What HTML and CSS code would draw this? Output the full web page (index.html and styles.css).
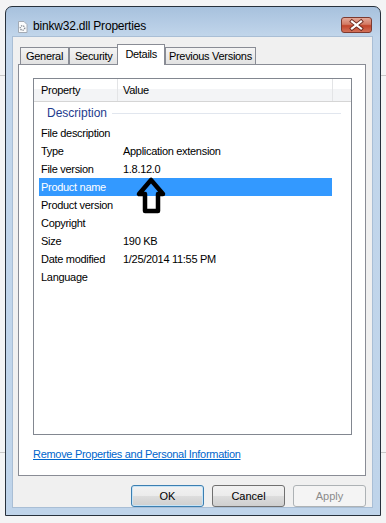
FILE: index.html
```html
<html>
  <head>
    <meta charset="utf-8"/>
    <link rel="stylesheet" href="styles.css">
  </head>
  <body>
    <div class="window">
      <div class="titlebar">
        <svg class="file-icon" width="11" height="12" viewBox="0 0 11 12">
          <path d="M1.5 0.5h5.5l3 3v8h-8.5z" fill="#fbfcfd" stroke="#a3abb5"/>
          <circle cx="5.5" cy="7" r="2.2" fill="none" stroke="#868c94" stroke-width="1.5" stroke-dasharray="1.1 0.9"/>
        </svg>
        <span class="title">binkw32.dll Properties</span>
        <div class="close">
          <svg width="29" height="14" viewBox="0 0 29 14">
            <path d="M10 3.5l9 7M19 3.5l-9 7" stroke="#6d2a1f" stroke-width="4" stroke-linecap="square"/>
            <path d="M10 3.5l9 7M19 3.5l-9 7" stroke="#fff" stroke-width="2.2" stroke-linecap="square"/>
          </svg>
        </div>
      </div>
      <div class="client">
        <div class="tabs">
          <div class="tab">General</div>
          <div class="tab">Security</div>
          <div class="tab active">Details</div>
          <div class="tab narrow">Previous Versions</div>
        </div>
        <div class="panel">
          <div class="listview">
            <div class="lv-head">
              <div class="lv-col prop">Property</div>
              <div class="lv-col val">Value</div>
            </div>
            <div class="group"><span>Description</span></div>
            <div class="row"><span class="k">File description</span><span class="v"></span></div>
            <div class="row"><span class="k">Type</span><span class="v">Application extension</span></div>
            <div class="row"><span class="k">File version</span><span class="v">1.8.12.0</span></div>
            <div class="row selected"><span class="k">Product name</span><span class="v"></span></div>
            <div class="row"><span class="k">Product version</span><span class="v"></span></div>
            <div class="row"><span class="k">Copyright</span><span class="v"></span></div>
            <div class="row"><span class="k">Size</span><span class="v">190 KB</span></div>
            <div class="row"><span class="k">Date modified</span><span class="v">1/25/2014 11:55 PM</span></div>
            <div class="row"><span class="k">Language</span><span class="v"></span></div>

            <svg class="arrow" width="40" height="45" viewBox="0 0 40 45">
              <path d="M18 7L6 21h6v17h13v-17h5z" fill="none" stroke="#000" stroke-width="4.5" stroke-linejoin="round"/>
            </svg>
          </div>
          <a class="remove" href="#">Remove Properties and Personal Information</a>
        </div>
        <div class="buttons">
          <button class="btn default">OK</button>
          <button class="btn">Cancel</button>
          <button class="btn" disabled>Apply</button>
        </div>
      </div>
    </div>
  </body>
</html>
```

FILE: styles.css
```css
body {
  margin: 0;
  height: 523px;
  overflow: hidden;
  font-family: "Liberation Sans", Arial, sans-serif;
  font-size: 11px;
  letter-spacing: -0.3px;
  color: #000;
  background:
    linear-gradient(#c8c8c8, #c8c8c8) 0 75px / 100% 1px no-repeat,
    linear-gradient(#c8c8c8, #c8c8c8) 0 452px / 100% 1px no-repeat,
    #f3f4f5;
}

.window {
  box-sizing: border-box;
  width: 376px;
  height: 510px;
  margin: 6px 0 0 5px;
  display: flex;
  flex-direction: column;

  border: 1px solid #27313c;
  border-radius: 7px 7px 0 0;
  background: linear-gradient(#a7c1dd, #c2d6eb 30px, #bfd4ea);
}

.titlebar {
  height: 29px;
  display: flex;
  align-items: flex-start;
  padding: 0 8px 0 11px;
}

.file-icon {
  margin-top: 14px;
}

.title {
  margin: 12px 0 0 5px;
  font-size: 12px;
  line-height: 14px;
  letter-spacing: -0.2px;
}

.close {
  box-sizing: border-box;
  width: 31px;
  height: 16px;
  margin: 10px 0 0 auto;

  border: 1px solid #7d3a2f;
  border-radius: 3px;
  background: linear-gradient(#e4a898, #d37a64 45%, #c2442a 55%, #d2715a);
}

.close svg { display: block; }

.client {
  box-sizing: border-box;
  height: 472px;
  margin: 0 7px 7px 6px;
  padding: 7px 6px 0 5px;

  border: 1px solid #a9bed5;
  background: #f0f0f0;
}

.tabs {
  display: flex;
  align-items: flex-end;
  height: 20px;
  margin-left: 2px;
}

.tab {
  box-sizing: border-box;
  height: 17px;
  padding: 0 5px;

  border: 1px solid #898c95;
  border-bottom: none;
  background: linear-gradient(#f4f4f4, #e2e2e2);
  line-height: 16px;
}

.tab.narrow {
  padding: 0 3px;
}

.tab.active {
  position: relative;
  z-index: 1;
  height: 21px;
  margin: 0 0 -1px -1px;
  padding: 0 7px;

  background: #fff;
  line-height: 18px;
}

.panel {
  box-sizing: border-box;
  height: 412px;
  padding: 13px 13px 0 14px;

  border: 1px solid #898c95;
  background: #fff;
}

.listview {
  position: relative;
  box-sizing: border-box;
  height: 357px;
  border: 1px solid #828790;
}

.lv-head {
  box-sizing: border-box;
  display: flex;
  height: 23px;
  border-bottom: 1px solid #d5d5d5;
  background: linear-gradient(#fff 45%, #f3f4f6 45%);
  line-height: 22px;
}

.lv-col {
  box-sizing: border-box;
  border-right: 1px solid #e3e4e6;
}

.prop {
  width: 84px;
  padding-left: 7px;
}

.val {
  width: 215px;
  padding-left: 5px;
}

.group {
  display: flex;
  align-items: center;
  height: 22px;
  padding: 0 10px 0 13px;

  font-size: 12px;
  letter-spacing: 0;
  color: #1e3c8e;
}

.group::after {
  content: "";
  flex: 1;
  height: 1px;
  margin-left: 5px;
  background: #e1e6ee;
}

.row {
  display: flex;
  width: 293px;
  height: 18px;
  margin-left: 5px;
  line-height: 18px;
}

.row .k {
  box-sizing: border-box;
  width: 84px;
  padding-left: 2px;
}

.row.selected {
  background: #3399ff;
  color: #fff;
}

.arrow {
  position: absolute;
  left: 99px;
  top: 94px;
}

.remove {
  display: block;
  width: max-content;
  margin-top: 13px;
  line-height: 13px;
  color: #0066cc;
}

.buttons {
  display: flex;
  justify-content: flex-end;
  gap: 8px;
  margin-top: 9px;
}

.btn {
  box-sizing: border-box;
  width: 73px;
  height: 22px;
  padding: 0;

  font: inherit;
  letter-spacing: 0;
  color: #000;
  border: 1px solid #707070;
  border-radius: 3px;
  background: linear-gradient(#f2f2f2, #ebebeb 50%, #dddddd 50%, #cfcfcf);
}

.btn.default {
  border-color: #3c7fb1;
  box-shadow: inset 0 0 0 1px #c7e4f7;
}

.btn:disabled {
  color: #8b8b8b;
  border-color: #adb2b5;
  background: #f4f4f4;
}
```
